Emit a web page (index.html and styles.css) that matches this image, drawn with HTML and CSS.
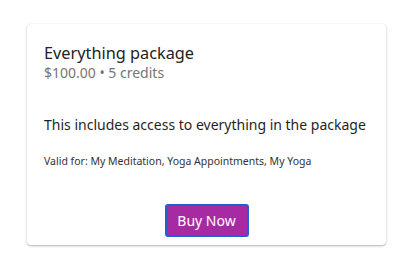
FILE: index.html
```html
<!DOCTYPE html>
<html>
<head>
<meta charset="utf-8">
<link rel="stylesheet" href="styles.css">
</head>
<body>
<div class="card">
  <div class="header">
    <div class="title">Everything package</div>
    <div class="subtitle">$100.00 • 5 credits</div>
  </div>
  <div class="content">
    <p class="desc">This includes access to everything in the package</p>
    <p class="valid">Valid for: My Meditation, Yoga Appointments, My Yoga</p>
  </div>
  <div class="actions">
    <button class="buy">Buy Now</button>
  </div>
</div>
</body>
</html>
```
FILE: styles.css
```css
html, body {
  margin: 0;
  padding: 0;
  background: #ffffff;
}
body {
  font-family: "Noto Sans", "Open Sans", sans-serif;
  color: #1f1f1f;
  padding: 24px 23px 20px 27px;
}
.card {
  width: 359px;
  height: 221px;
  box-sizing: border-box;
  border-radius: 4px;
  background: #fff;
  box-shadow: 0 1px 3px rgba(0,0,0,0.2), 0 1px 1px rgba(0,0,0,0.12), 0 0 1px rgba(0,0,0,0.1);
  padding: 18px 17px 8px 17px;
  display: flex;
  flex-direction: column;
}
.title {
  font-size: 16.3px;
  line-height: 22px;
  color: #222;
}
.subtitle {
  font-size: 14px;
  line-height: 17px;
  color: #757575;
}
.content {
  margin-top: 33px;
}
.desc {
  margin: 0;
  font-size: 14px;
  line-height: 22px;
  color: #1f1f1f;
}
.valid {
  margin: 17px 0 0 0;
  font-size: 10.5px;
  line-height: 16px;
  color: #333;
}
.actions {
  margin-top: auto;
  display: flex;
  justify-content: center;
}
.buy {
  font-family: "Noto Sans", "Open Sans", sans-serif;
  font-size: 14px;
  color: #fff;
  background: #a62ba2;
  border: 2px solid #2060c8;
  border-radius: 3px;
  width: 84px;
  height: 33px;
  padding: 0;
}
```
